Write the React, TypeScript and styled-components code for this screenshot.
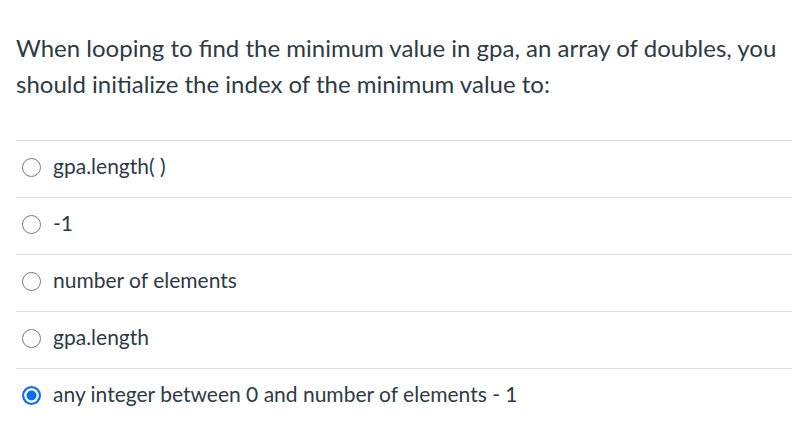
import React from "react";
import styled, { createGlobalStyle } from "styled-components";

const GlobalStyle = createGlobalStyle`
  body {
    margin: 0;
    background: #fff;
    font-family: Lato, "Open Sans", sans-serif;
    color: #2d3b45;
  }
`;

const Wrapper = styled.div`
  padding: 30px 6px 0 16px;
`;

const Question = styled.div`
  font-size: 24px;
  line-height: 36px;
  padding-bottom: 38px;
  border-bottom: 1px solid #dddddd;
`;

const Answer = styled.label<{ $last?: boolean }>`
  display: flex;
  align-items: center;
  gap: 12px;
  height: 48px;
  padding: 0 0 8px 6px;
  border-bottom: 1px solid ${(p) => (p.$last ? "transparent" : "#dddddd")};
  font-size: 21px;
  cursor: pointer;
`;

const Radio = styled.span<{ $checked: boolean }>`
  box-sizing: border-box;
  width: 19px;
  height: 19px;
  margin-top: 5px;
  border-radius: 50%;
  border: ${(p) => (p.$checked ? "2px solid #0b6ff5" : "1.5px solid #7a7a7a")};
  background: ${(p) => (p.$checked ? "#0b6ff5" : "#fff")};
  box-shadow: ${(p) => (p.$checked ? "inset 0 0 0 2.5px #fff" : "none")};
  flex-shrink: 0;
`;

const ANSWERS = [
  "gpa.length( )",
  "-1",
  "number of elements",
  "gpa.length",
  "any integer between 0 and number of elements - 1",
];

export default function App() {
  const [selected, setSelected] = React.useState(4);
  return (
    <>
      <GlobalStyle />
      <Wrapper>
        <Question>
          When looping to find the minimum value in gpa, an array of doubles, you
          should initialize the index of the minimum value to:
        </Question>
        {ANSWERS.map((a, i) => (
          <Answer key={i} $last={i === ANSWERS.length - 1} onClick={() => setSelected(i)}>
            <Radio $checked={selected === i} />
            <span>{a}</span>
          </Answer>
        ))}
      </Wrapper>
    </>
  );
}
